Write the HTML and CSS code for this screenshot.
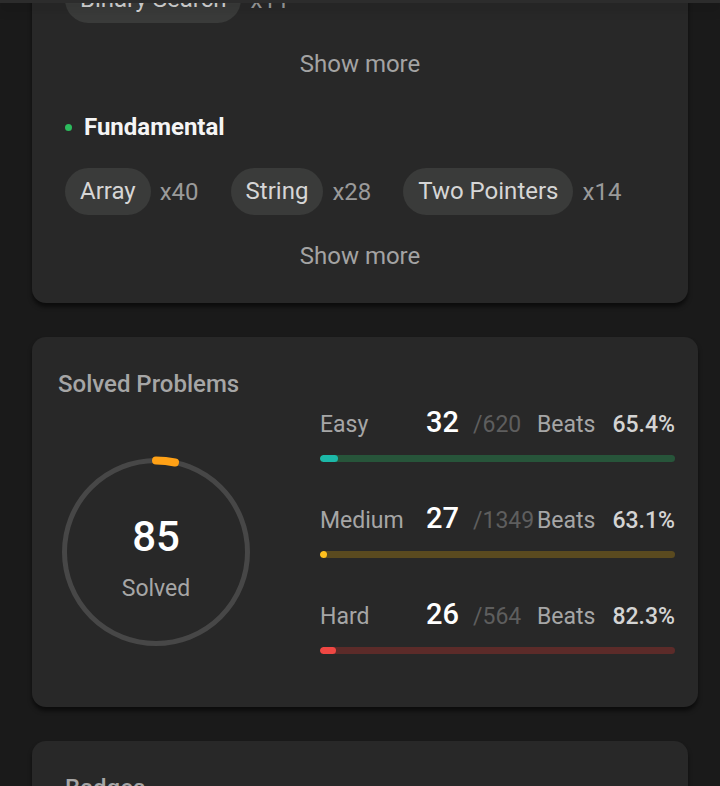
FILE: index.html
```html
<!DOCTYPE html>
<html lang="en">
<head>
  <meta charset="UTF-8" />
  <meta name="viewport" content="width=device-width, initial-scale=1" />
  <title>Profile</title>
  <link rel="stylesheet" href="styles.css">
</head>
<body>
  <!-- Sticky top bar (only its edge is visible) -->
  <div class="top-bar"></div>

  <main class="page">
    <!-- Skills card -->
    <section class="card skills-card">
      <div class="skill-group">
        <h3 class="group-title"><span class="dot dot-mid"></span>Intermediate</h3>
        <div class="tag-row">
          <div class="tag-item"><span class="tag">Binary Search</span><span class="tag-count">x11</span></div>
        </div>
        <div class="show-more">Show more</div>
      </div>

      <div class="skill-group">
        <h3 class="group-title"><span class="dot dot-fund"></span>Fundamental</h3>
        <div class="tag-row">
          <div class="tag-item"><span class="tag">Array</span><span class="tag-count">x40</span></div>
          <div class="tag-item"><span class="tag">String</span><span class="tag-count">x28</span></div>
          <div class="tag-item"><span class="tag">Two Pointers</span><span class="tag-count">x14</span></div>
        </div>
        <div class="show-more">Show more</div>
      </div>
    </section>

    <!-- Solved problems card -->
    <section class="card solved-card">
      <h2 class="card-title">Solved Problems</h2>
      <div class="solved-body">
        <div class="ring">
          <svg viewBox="0 0 196 196" width="196" height="196" xmlns="http://www.w3.org/2000/svg">
            <circle cx="98" cy="98" r="91.5" fill="none" stroke="#474747" stroke-width="5"/>
            <path d="M98 6.5 A91.5 91.5 0 0 1 117 8.5" fill="none" stroke="#ffa116" stroke-width="8" stroke-linecap="round"/>
          </svg>
          <div class="ring-text">
            <div class="ring-num">85</div>
            <div class="ring-label">Solved</div>
          </div>
        </div>

        <div class="stats">
          <div class="stat">
            <div class="stat-line">
              <span class="stat-label">Easy</span>
              <span class="stat-count">32</span>
              <span class="stat-total">/620</span>
              <span class="stat-beats">Beats</span>
              <span class="stat-pct">65.4%</span>
            </div>
            <div class="bar bar-easy"><div class="bar-fill" style="width: 5.2%"></div></div>
          </div>
          <div class="stat">
            <div class="stat-line">
              <span class="stat-label">Medium</span>
              <span class="stat-count">27</span>
              <span class="stat-total">/1349</span>
              <span class="stat-beats">Beats</span>
              <span class="stat-pct">63.1%</span>
            </div>
            <div class="bar bar-medium"><div class="bar-fill" style="width: 2%"></div></div>
          </div>
          <div class="stat">
            <div class="stat-line">
              <span class="stat-label">Hard</span>
              <span class="stat-count">26</span>
              <span class="stat-total">/564</span>
              <span class="stat-beats">Beats</span>
              <span class="stat-pct">82.3%</span>
            </div>
            <div class="bar bar-hard"><div class="bar-fill" style="width: 4.6%"></div></div>
          </div>
        </div>
      </div>
    </section>

    <!-- Badges card -->
    <section class="card badges-card">
      <h2 class="card-title">Badges</h2>
    </section>
  </main>
</body>
</html>
```

FILE: styles.css
```css
/* Reset default styling */
* {
  margin: 0;
  padding: 0;
  box-sizing: border-box;
}

body {
  font-family: Roboto, 'Noto Sans', Arial, sans-serif;
  background: #1a1a1a;
  color: #9e9e9e;
  overflow: hidden;
}

.top-bar {
  position: fixed;
  top: 0;
  left: 0;
  right: 0;
  height: 3px;
  background: #2c2c2c;
  box-shadow: 0 4px 12px rgba(0, 0, 0, 0.35);
  z-index: 10;
}

.page {
  padding: 0 32px;
  margin-top: -113px;
  display: flex;
  flex-direction: column;
  gap: 34px;
}

.card {
  background: #282828;
  border-radius: 14px;
  box-shadow: 0 4px 4px rgba(0, 0, 0, 0.55);
}

/* Skills card */
.skills-card {
  padding: 33px 33px 32px;
  display: flex;
  flex-direction: column;
  gap: 33px;
}

.group-title {
  display: flex;
  align-items: center;
  gap: 12px;
  font-size: 24px;
  font-weight: 700;
  line-height: 30px;
  color: #f5f5f5;
  margin-bottom: 26px;
}

.dot {
  width: 7px;
  height: 7px;
  border-radius: 50%;
}

.dot-mid {
  background: #ffb800;
}

.dot-fund {
  background: #2cbb5d;
}

.tag-row {
  display: flex;
  flex-wrap: wrap;
  column-gap: 32px;
  margin-bottom: 26px;
}

.tag-item {
  display: flex;
  align-items: center;
  gap: 9px;
  font-size: 24px;
}

.tag {
  background: #3a3b3a;
  color: #d6d6d6;
  height: 47px;
  line-height: 47px;
  padding: 0 15px;
  border-radius: 24px;
}

.tag-count {
  color: #9a9a9a;
}

.show-more {
  text-align: center;
  font-size: 24px;
  line-height: 30px;
  color: #a3a3a3;
}

/* Solved problems card */
.solved-card {
  height: 370px;
  margin-right: -10px;
  padding: 33px 23px 0 26px;
}

.card-title {
  font-size: 24px;
  font-weight: 500;
  line-height: 28px;
  color: #a6a6a6;
}

.solved-body {
  display: flex;
  justify-content: space-between;
  margin-top: 7px;
}

.ring {
  position: relative;
  width: 196px;
  height: 196px;
  margin-top: 49px;
}

.ring svg {
  display: block;
}

.ring-text {
  position: absolute;
  inset: 0;
  display: flex;
  flex-direction: column;
  align-items: center;
  justify-content: center;
  padding-top: 10px;
}

.ring-num {
  font-size: 42px;
  font-weight: 500;
  color: #ffffff;
  line-height: 48px;
}

.ring-label {
  font-size: 23px;
  color: #a6a6a6;
  margin-top: 14px;
}

.stats {
  width: 355px;
  display: flex;
  flex-direction: column;
  gap: 39px;
}

.stat-line {
  display: flex;
  align-items: baseline;
  height: 34px;
  font-size: 23px;
}

.stat-label {
  width: 106px;
  color: #a6a6a6;
}

.stat-count {
  width: 47px;
  font-size: 29px;
  font-weight: 500;
  color: #ffffff;
}

.stat-total {
  width: 64px;
  font-size: 23px;
  color: #5e5e5e;
}

.stat-beats {
  flex: 1;
  color: #a6a6a6;
}

.stat-pct {
  font-size: 23px;
  font-weight: 500;
  color: #d4d4d4;
}

.bar {
  margin-top: 16px;
  height: 7px;
  border-radius: 4px;
  overflow: hidden;
}

.bar-fill {
  height: 100%;
  min-width: 7px;
  border-radius: 4px;
}

.bar-easy {
  background: #27553a;
}

.bar-easy .bar-fill {
  background: #1cb8a8;
}

.bar-medium {
  background: #5a4a1f;
}

.bar-medium .bar-fill {
  background: #ffc01e;
}

.bar-hard {
  background: #5c2b29;
}

.bar-hard .bar-fill {
  background: #ef4743;
}

/* Badges card */
.badges-card {
  height: 200px;
  padding: 33px;
}
```
